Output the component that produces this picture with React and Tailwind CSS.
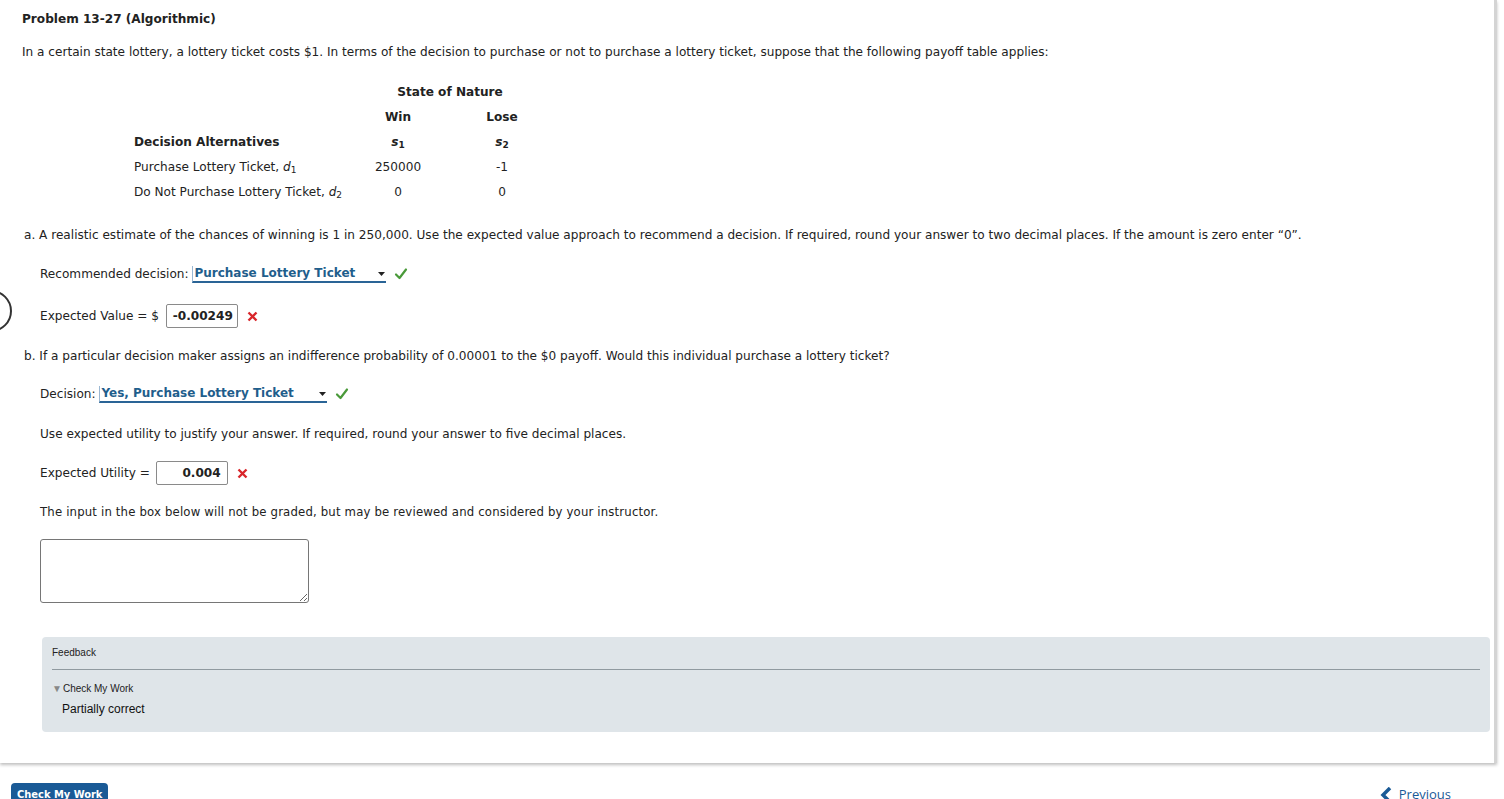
import React from "react";

const V = { fontFamily: '"DejaVu Sans", Verdana, sans-serif' };
const A = { fontFamily: '"Liberation Sans", Arial, sans-serif' };

function Check() {
  return (
    <svg width="14" height="14" viewBox="0 0 14 14" className="inline-block">
      <path d="M2 7.5 L5.5 11 L12 2.5" fill="none" stroke="#4a9a3a" strokeWidth="2.2" strokeLinecap="round" strokeLinejoin="round" />
    </svg>
  );
}

function Cross() {
  return (
    <svg width="11" height="11" viewBox="0 0 11 11" className="inline-block">
      <path d="M1.5 1.5 L9.5 9.5 M9.5 1.5 L1.5 9.5" fill="none" stroke="#d9262b" strokeWidth="2.4" />
    </svg>
  );
}

function Select({ text, width }) {
  return (
    <span
      className="relative inline-flex items-center h-[17px] border-b-2 border-l border-l-[#9bb8d3] border-b-[#2a6496] text-[#1f5e8c] font-bold text-[12px] pl-[1px]"
      style={{ width }}
    >
      <span>{text}</span>
      <svg width="7" height="4" viewBox="0 0 7 4" className="absolute right-[1px] top-[6px]">
        <path d="M0 0 L7 0 L3.5 4 Z" fill="#222" />
      </svg>
    </span>
  );
}

export default function App() {
  return (
    <div className="w-[1504px] h-[799px] bg-white overflow-hidden relative text-[#222] text-[12.1px]" style={V}>
      <div className="absolute left-[-30px] top-[290px] w-[42px] h-[42px] rounded-full border-2 border-[#333]" />
      <div className="w-[1497px] h-[763px] border-r-[3px] border-r-[#d4d4d4] shadow-[0_2px_3px_rgba(0,0,0,0.25)] flex flex-col">
        <div className="pl-[22px] pt-[11px] leading-[16px]">
          <div className="font-bold">Problem 13-27 (Algorithmic)</div>
          <div className="mt-[17px]">
            In a certain state lottery, a lottery ticket costs $1. In terms of the decision to purchase or not to purchase a lottery ticket, suppose that the following payoff table applies:
          </div>
        </div>

        <div className="pl-[134px] mt-[20px]">
          <div className="grid grid-cols-[212px_104px_104px] leading-[25px] whitespace-nowrap">
            <div></div>
            <div className="col-span-2 text-center font-bold">State of Nature</div>
            <div></div>
            <div className="text-center font-bold">Win</div>
            <div className="text-center font-bold">Lose</div>
            <div className="font-bold">Decision Alternatives</div>
            <div className="text-center font-bold italic">s<sub className="text-[9px] not-italic">1</sub></div>
            <div className="text-center font-bold italic">s<sub className="text-[9px] not-italic">2</sub></div>
            <div>Purchase Lottery Ticket, <i>d</i><sub className="text-[9px]">1</sub></div>
            <div className="text-center">250000</div>
            <div className="text-center">-1</div>
            <div>Do Not Purchase Lottery Ticket, <i>d</i><sub className="text-[9px]">2</sub></div>
            <div className="text-center">0</div>
            <div className="text-center">0</div>
          </div>
        </div>

        <div className="pl-[24px] mt-[22px] leading-[16px]">
          a. A realistic estimate of the chances of winning is 1 in 250,000. Use the expected value approach to recommend a decision. If required, round your answer to two decimal places. If the amount is zero enter “0”.
        </div>

        <div className="pl-[40px] mt-[22px] flex items-center h-[18px]">
          <span>Recommended decision:&nbsp;</span>
          <Select text="Purchase Lottery Ticket" width="194px" />
          <span className="ml-[8px] flex"><Check /></span>
        </div>

        <div className="pl-[40px] mt-[21px] flex items-center h-[24px]">
          <span>Expected Value = $&nbsp;</span>
          <span className="ml-[3px] inline-flex items-center justify-end w-[72px] h-[24px] border border-[#8a8a8a] rounded-[2px] font-bold pr-[4px]">-0.00249</span>
          <span className="ml-[9px] flex"><Cross /></span>
        </div>

        <div className="pl-[24px] mt-[20px] leading-[16px]">
          b. If a particular decision maker assigns an indifference probability of 0.00001 to the $0 payoff. Would this individual purchase a lottery ticket?
        </div>

        <div className="pl-[40px] mt-[21px] flex items-center h-[18px]">
          <span>Decision:&nbsp;</span>
          <Select text="Yes, Purchase Lottery Ticket" width="228px" />
          <span className="ml-[8px] flex"><Check /></span>
        </div>

        <div className="pl-[40px] mt-[23px] leading-[16px]">
          Use expected utility to justify your answer. If required, round your answer to five decimal places.
        </div>

        <div className="pl-[40px] mt-[19px] flex items-center h-[24px]">
          <span>Expected Utility =&nbsp;</span>
          <span className="ml-[2px] inline-flex items-center justify-end w-[72px] h-[24px] border border-[#8a8a8a] rounded-[2px] font-bold pr-[6px]">0.004</span>
          <span className="ml-[9px] flex"><Cross /></span>
        </div>

        <div className="pl-[40px] mt-[19px] text-[13px] leading-[16px]" style={{ fontFamily: '"DejaVu Sans Condensed", "DejaVu Sans", sans-serif', letterSpacing: "0.17px" }}>
          The input in the box below will not be graded, but may be reviewed and considered by your instructor.
        </div>

        <div className="pl-[40px] mt-[19px]">
          <textarea className="block w-[269px] h-[64px] border border-[#767676] rounded-[3px] resize-y" readOnly></textarea>
        </div>

        <div className="ml-[42px] mr-[4px] mt-[34px] h-[95px] bg-[#dfe5e9] rounded-[4px] px-[10px] pt-[10px]" style={A}>
          <div className="text-[10px] leading-[12px] text-[#222]">Feedback</div>
          <div className="mt-[10px] h-px bg-[#909aa0]"></div>
          <div className="mt-[13px] text-[10px] leading-[12px] flex items-center">
            <span className="text-[#888] text-[10px] mr-[1px]">▼</span>Check My Work
          </div>
          <div className="mt-[7px] ml-[10px] text-[12px] leading-[14px] text-[#111]">Partially correct</div>
        </div>
      </div>

      <div className="flex justify-between items-start px-[11px] mt-[20px]">
        <div className="bg-[#1a5a96] text-white text-[11px] font-bold rounded-[4px] px-[6px] pt-[5px] h-[24px] leading-[14px]" style={{ fontFamily: '"DejaVu Sans Condensed", "DejaVu Sans", sans-serif' }}>
          Check My Work
        </div>
        <div className="flex items-center mr-[42px] mt-[2px] text-[#1a5a96] text-[13px]" style={{ fontFamily: '"Open Sans", sans-serif' }}>
          <svg width="12" height="16" viewBox="0 0 12 16" className="mr-[7px]">
            <path d="M10 1 L3 8 L10 15" fill="none" stroke="#1a5a96" strokeWidth="3.5" strokeLinejoin="miter" />
          </svg>
          Previous
        </div>
      </div>
    </div>
  );
}
